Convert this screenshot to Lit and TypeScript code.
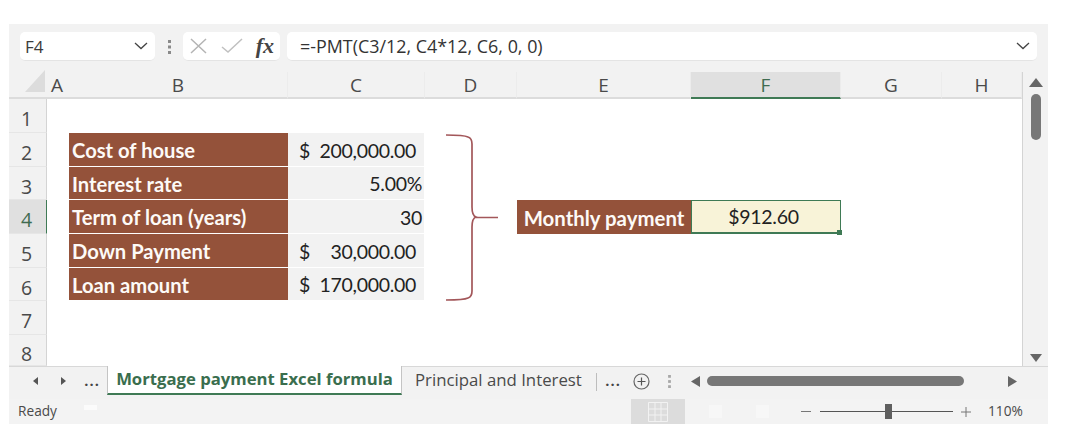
import { LitElement, html, css, svg } from "lit";
import { customElement } from "lit/decorators.js";

const COLS = ["A", "B", "C", "D", "E", "F", "G", "H"];
const ROWS = [1, 2, 3, 4, 5, 6, 7, 8];

const TABLE = [
  { label: "Cost of house", row: 2, sym: "$", val: "200,000.00" },
  { label: "Interest rate", row: 3, sym: "", val: "5.00%" },
  { label: "Term of loan (years)", row: 4, sym: "", val: "30" },
  { label: "Down Payment", row: 5, sym: "$", val: "30,000.00" },
  { label: "Loan amount", row: 6, sym: "$", val: "170,000.00" },
];

@customElement("app-root")
export class AppRoot extends LitElement {
  static styles = css`
    :host {
      display: block;
      width: 1066px;
      height: 444px;
      background: #fff;
      overflow: hidden;
      font-family: "Open Sans", sans-serif;
      color: #444;
    }
    .page { padding: 24px 18px 20px 9px; }
    .win {
      width: 1039px;
      height: 400px;
      background: #f2f2f2;
      display: flex;
      flex-direction: column;
    }
    .fbar {
      height: 29px;
      margin-top: 8px;
      padding: 0 11px;
      display: flex;
      align-items: stretch;
    }
    .box {
      background: #fff;
      border-radius: 5px;
      border-bottom: 1px solid #e4e4e4;
      display: flex;
      align-items: center;
    }
    .name {
      width: 135px;
      padding: 0 7px 0 5px;
      box-sizing: border-box;
      justify-content: space-between;
      font-size: 17px;
      color: #3c3c3c;
    }
    .grip { width: 28px; display: flex; align-items: center; justify-content: center; }
    .fx {
      width: 97px;
      box-sizing: border-box;
      padding: 0 6px 0 6px;
      justify-content: space-between;
    }
    .fxt {
      font-family: "Liberation Serif", serif;
      font-style: italic;
      font-weight: 700;
      font-size: 22px;
      color: #444;
      line-height: 1;
    }
    .formula {
      margin-left: 7px;
      flex: 1;
      padding: 0 7px 0 13px;
      justify-content: space-between;
      font-size: 17.9px;
      color: #333;
    }
    .main {
      margin-top: 11px;
      display: flex;
      height: 294px;
    }
    .sheet {
      position: relative;
      display: grid;
      grid-template-columns: 38px 22px 219px 137px 92px 174px 150px 101px 80px;
      grid-template-rows: 27px 34px 34px 33px 34px 34px 33px 34px 31px;
      width: 1013px;
      background: #fff;
    }
    .corner, .ch, .rh { background: #f2f2f2; }
    .corner { display: flex; align-items: flex-end; justify-content: flex-end; padding: 0 2px 5px 0; border-bottom: 2px solid #dcdcdc; }
    .ch {
      font-size: 19px;
      color: #4a4a4a;
      display: flex;
      align-items: center;
      justify-content: center;
      padding-top: 2px;
      border-bottom: 2px solid #dcdcdc;
      box-sizing: border-box;
      border-right: 1px solid #ececec;
      line-height: 1;
    }
    .ch.a { justify-content: flex-start; padding-left: 4px; border-right: 0; }
    .ch.on { background: #e0e0e0; border-bottom-color: #3f7a55; color: #3f6b50; }
    .rh {
      grid-column: 1;
      font-size: 19.5px;
      color: #4a4a4a;
      display: flex;
      align-items: center;
      justify-content: center;
      padding: 7px 2px 0 0;
      box-sizing: border-box;
      border-bottom: 1px solid #e6e6e6;
      border-right: 1px solid #d4d4d4;
      line-height: 1;
    }
    .rh.on { background: #e0e0e0; border-right: 1px solid #3f7a55; color: #3f6b50; }
    .lab {
      grid-column: 3;
      background: #94523a;
      color: #fdfaf7;
      font-family: Lato, sans-serif;
      font-weight: 700;
      font-size: 20.2px;
      display: flex;
      align-items: center;
      padding: 2px 0 0 3px;
      margin-bottom: 1px;
      line-height: 1;
    }
    .val {
      grid-column: 4;
      background: #f2f2f2;
      color: #222;
      font-family: Lato, sans-serif;
      font-size: 19.5px;
      letter-spacing: -0.3px;
      display: flex;
      align-items: center;
      justify-content: flex-end;
      margin-bottom: 1px;
      padding: 2px 2px 0 0;
      line-height: 1;
      margin-right: 1px;
    }
    .val.acc { justify-content: space-between; padding: 2px 8px 0 11px; }
    .mp {
      grid-column: 6;
      grid-row: 5;
      background: #94523a;
      color: #fdfaf7;
      font-family: Lato, sans-serif;
      font-weight: 700;
      font-size: 20.4px;
      display: flex;
      align-items: center;
      justify-content: center;
      padding-top: 2px;
      line-height: 1;
    }
    .res {
      grid-column: 7;
      grid-row: 5;
      background: #f8f3d8;
      border: 1px solid #3f7a55;
      border-bottom-width: 2px;
      color: #222;
      font-family: Lato, sans-serif;
      font-size: 19.5px;
      letter-spacing: -0.3px;
      display: flex;
      align-items: center;
      justify-content: center;
      padding: 1px 5px 0 0;
      line-height: 1;
      position: relative;
      box-sizing: border-box;
    }
    .handle {
      position: absolute;
      right: -2px;
      bottom: -3px;
      width: 5px;
      height: 5px;
      background: #3f7a55;
    }
    .brace { position: absolute; left: 0; top: 0; pointer-events: none; }
    .vs {
      flex: 1;
      display: flex;
      flex-direction: column;
      align-items: center;
      border-left: 1px solid #d4d4d4;
      padding-left: 1px;
      padding-top: 6px;
      box-sizing: border-box;
    }
    .vthumb {
      width: 10px;
      height: 46px;
      margin-top: 7px;
      background: #777;
      border-radius: 5px;
    }
    .vs .sp { flex: 1; }
    .vs .dn { margin-bottom: 4px; }
    .tabs {
      height: 29px;
      border-top: 1px solid #d8d8d8;
      box-sizing: border-box;
      display: flex;
      align-items: stretch;
      background: #f2f2f2;
    }
    .nav { width: 98px; display: flex; align-items: center; padding-left: 24px; box-sizing: border-box; gap: 23px; }
    .more { font-size: 17px; font-weight: 600; color: #444; line-height: 1; letter-spacing: 0.6px; padding-bottom: 4px; }
    .tab {
      display: flex;
      align-items: center;
      line-height: 1;
      padding-bottom: 2px;
    }
    .tab.on {
      width: 295px;
      box-sizing: border-box;
      background: #fff;
      border-left: 1px solid #c4c4c4;
      border-right: 1px solid #c4c4c4;
      border-bottom: 2px solid #3f7a55;
      font-weight: 700;
      color: #3a6e4e;
      font-size: 16.7px;
      justify-content: center;
      margin-top: -1px;
      padding-bottom: 0;
    }
    .tab.off {
      width: 194px;
      box-sizing: border-box;
      padding-left: 13px;
      color: #4a4a4a;
      font-size: 16.8px;
      white-space: nowrap;
    }
    .tabdiv { width: 1px; background: #bdbdbd; margin: 6px 0 4px; }
    .tabtools { display: flex; align-items: center; margin-left: 8px; }
    .add { margin-left: 12px; display: flex; }
    .tgrip { margin-left: 18px; display: flex; }
    .hs { flex: 1; display: flex; align-items: center; margin-left: 20px; padding-right: 31px; }
    .hthumb { width: 257px; height: 10px; border-radius: 5px; background: #777; margin-left: 7px; }
    .hs .sp { flex: 1; }
    .status {
      margin-top: 4px;
      flex: 1;
      display: flex;
      align-items: stretch;
      font-size: 13.7px;
      color: #4a4a4a;
      background: #f3f3f3;
    }
    .ready { width: 622px; padding: 0 0 3px 9px; box-sizing: border-box; display: flex; align-items: center; position: relative; }
    .smudge { position: absolute; left: 75px; top: 6px; width: 13px; height: 5px; background: #fbfbfb; }
    .view { width: 54px; background: #dcdcdc; display: flex; align-items: center; justify-content: center; }
    .ghosts { width: 116px; display: flex; align-items: center; gap: 34px; padding-left: 24px; box-sizing: border-box; }
    .ghost { width: 13px; height: 13px; background: #f7f7f7; }
    .zoom { display: flex; align-items: center; flex: 1; }
    .zm { width: 10px; height: 1px; background: #777; }
    .track { width: 133px; height: 1px; background: #555; margin-left: 9px; position: relative; }
    .thumb { position: absolute; left: 65px; top: -7px; width: 7px; height: 15px; background: #5f5f5f; }
    .zp { margin-left: 8px; display: flex; }
    .pct { margin-left: 17px; padding-bottom: 2px; }
  `;

  private chev() {
    return svg`<svg width="14" height="8" viewBox="0 0 14 8"><path d="M1 1l6 5.5L13 1" fill="none" stroke="#444" stroke-width="1.3"/></svg>`;
  }

  private grip(h = 14, c = "#8a8a8a") {
    return svg`<svg width="3" height="${h}" viewBox="0 0 3 14"><rect y="0" width="3" height="3" fill="${c}"/><rect y="5.5" width="3" height="3" fill="${c}"/><rect y="11" width="3" height="3" fill="${c}"/></svg>`;
  }

  render() {
    return html`
      <div class="page">
        <div class="win">
          <div class="fbar">
            <div class="box name"><span>F4</span>${this.chev()}</div>
            <div class="grip">${this.grip()}</div>
            <div class="box fx">
              <svg width="20" height="18" viewBox="0 0 20 18"><path d="M2 2l15 14M17 2L2 16" stroke="#b4b4b4" stroke-width="1.5" fill="none"/></svg>
              <svg width="22" height="16" viewBox="0 0 22 16"><path d="M1 9l6 5L21 1" stroke="#c0c0c0" stroke-width="1.5" fill="none"/></svg>
              <span class="fxt">fx</span>
            </div>
            <div class="box formula"><span>=-PMT(C3/12, C4*12, C6, 0, 0)</span>${this.chev()}</div>
          </div>
          <div class="main">
            <div class="sheet">
              <div class="corner">
                <svg width="20" height="22" viewBox="0 0 20 22"><path d="M20 0V22H0Z" fill="#dcdcdc"/></svg>
              </div>
              ${COLS.map(
                (c) => html`<div class="ch ${c === "A" ? "a" : ""} ${c === "F" ? "on" : ""}">${c}</div>`
              )}
              ${ROWS.map(
                (r) => html`<div class="rh ${r === 4 ? "on" : ""}" style="grid-row:${r + 1}">${r}</div>`
              )}
              ${TABLE.map(
                (t) => html`
                  <div class="lab" style="grid-row:${t.row + 1}">${t.label}</div>
                  <div class="val ${t.sym ? "acc" : ""}" style="grid-row:${t.row + 1}">
                    ${t.sym ? html`<span>${t.sym}</span>` : ""}<span>${t.val}</span>
                  </div>
                `
              )}
              <div class="mp">Monthly payment</div>
              <div class="res">$912.60<span class="handle"></span></div>
              <svg class="brace" width="1013" height="294" viewBox="9 72 1013 294">
                <path d="M446 135C456 135 464 135 468 137C471 138 472 140 472 144V207C472 213 473 216 476 217C473 218 472 221 472 227V291C472 295 471 297 468 298C464 300 456 300 446 300M476 217.5H498" fill="none" stroke="#a3575a" stroke-width="1.7"/>
              </svg>
            </div>
            <div class="vs">
              <svg width="14" height="9" viewBox="0 0 14 9"><path d="M7 0l7 9H0Z" fill="#666"/></svg>
              <div class="vthumb"></div>
              <div class="sp"></div>
              <svg class="dn" width="12" height="8" viewBox="0 0 12 8"><path d="M0 0h12L6 8Z" fill="#666"/></svg>
            </div>
          </div>
          <div class="tabs">
            <div class="nav">
              <svg width="5" height="8" viewBox="0 0 5 8"><path d="M5 0v8L0 4Z" fill="#555"/></svg>
              <svg width="5" height="8" viewBox="0 0 5 8"><path d="M0 0v8l5-4Z" fill="#555"/></svg>
              <span class="more" style="margin-left:-5px">...</span>
            </div>
            <div class="tab on">Mortgage payment Excel formula</div>
            <div class="tab off">Principal and Interest</div>
            <div class="tabdiv"></div>
            <div class="tabtools">
              <span class="more">...</span>
              <span class="add"><svg width="17" height="17" viewBox="0 0 17 17"><circle cx="8.5" cy="8.5" r="7.5" fill="none" stroke="#666" stroke-width="1.2"/><path d="M8.5 4.5v8M4.5 8.500h8" stroke="#555" stroke-width="1.2"/></svg></span>
              <span class="tgrip">${this.grip(13, "#a8a8a8")}</span>
            </div>
            <div class="hs">
              <svg width="9" height="11" viewBox="0 0 9 11"><path d="M9 0v11L0 5.5Z" fill="#666"/></svg>
              <div class="hthumb"></div>
              <div class="sp"></div>
              <svg width="9" height="11" viewBox="0 0 9 11"><path d="M0 0v11l9-5.500Z" fill="#666"/></svg>
            </div>
          </div>
          <div class="status">
            <div class="ready">Ready<span class="smudge"></span></div>
            <div class="view">
              <svg width="20" height="20" viewBox="0 0 20 20"><path d="M.5.500h19v19H.500ZM7 .5v19M13 .5v19M.5 7h19M.5 13h19" fill="none" stroke="#f2f2f2" stroke-width="1"/></svg>
            </div>
            <div class="ghosts"><div class="ghost"></div><div class="ghost"></div></div>
            <div class="zoom">
              <div class="zm"></div>
              <div class="track"><div class="thumb"></div></div>
              <span class="zp"><svg width="10" height="10" viewBox="0 0 10 10"><path d="M5 0v10M0 5h10" stroke="#777" stroke-width="1"/></svg></span>
              <span class="pct">110%</span>
            </div>
          </div>
        </div>
      </div>
    `;
  }
}
